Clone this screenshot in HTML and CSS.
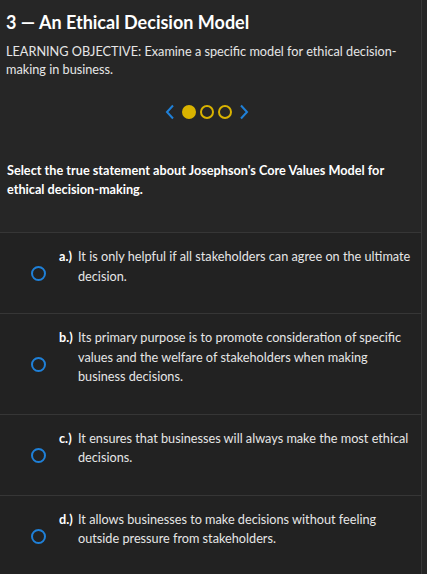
FILE: index.html
```html
<!DOCTYPE html>
<html lang="en">
<head>
    <meta charset="UTF-8">
    <title>3 — An Ethical Decision Model</title>
    <link rel="stylesheet" href="styles.css">
</head>
<body>
    <div class="page">
        <header class="intro">
            <h1 class="title">3 — An Ethical Decision Model</h1>
            <p class="objective">LEARNING OBJECTIVE: Examine a specific model for ethical decision-making in business.</p>
        </header>

        <nav class="pager">
            <svg class="arrow" width="10" height="16" viewBox="0 0 10 16"><path d="M8 1.5 L2 8 L8 14.5" fill="none" stroke="#1f80d8" stroke-width="2"/></svg>
            <span class="dot dot-on"></span>
            <span class="dot"></span>
            <span class="dot"></span>
            <svg class="arrow" width="10" height="16" viewBox="0 0 10 16"><path d="M2 1.5 L8 8 L2 14.5" fill="none" stroke="#1f80d8" stroke-width="2"/></svg>
        </nav>

        <p class="question">Select the true statement about Josephson's Core Values Model for ethical decision-making.</p>

        <ul class="answers">
            <li class="answer">
                <span class="radio"></span>
                <span class="letter">a.)</span>
                <span class="text">It is only helpful if all stakeholders can agree on the ultimate decision.</span>
            </li>
            <li class="answer">
                <span class="radio"></span>
                <span class="letter">b.)</span>
                <span class="text">Its primary purpose is to promote consideration of specific values and the welfare of stakeholders when making business decisions.</span>
            </li>
            <li class="answer">
                <span class="radio"></span>
                <span class="letter">c.)</span>
                <span class="text">It ensures that businesses will always make the most ethical decisions.</span>
            </li>
            <li class="answer">
                <span class="radio"></span>
                <span class="letter">d.)</span>
                <span class="text">It allows businesses to make decisions without feeling outside pressure from stakeholders.</span>
            </li>
        </ul>
    </div>
</body>
</html>
```

FILE: styles.css
```css
body {
    margin: 0;
    background: #262626;
    color: #e6e6e6;
    font-family: Lato, "Open Sans", sans-serif;
    font-size: 12.7px;
}

.page {
    width: 421px;
    min-height: 574px;
    border-right: 1px solid #383838;
    background: #262626;
}

.intro {
    padding: 11px 6px 0;
}

.title {
    margin: 0;
    font-size: 18px;
    line-height: 22px;
    font-weight: 700;
    color: #fff;
}

.objective {
    margin: 9px 0 0;
    line-height: 18px;
}

.pager {
    display: flex;
    justify-content: center;
    align-items: center;
    gap: 4px;
    margin-top: 26px;
    padding-right: 8px;
}

.arrow { margin: 0 3px; }

.dot {
    width: 10px;
    height: 10px;
    border: 2px solid #d9b300;
    border-radius: 50%;
}

.dot-on { background: #d9b300; }

.question {
    margin: 0;
    padding: 41px 7px 33px;
    font-weight: 700;
    line-height: 19px;
    color: #fff;
}

.answers {
    list-style: none;
    margin: 0;
    padding: 0;
    background: #222;
}

.answer {
    display: flex;
    align-items: flex-start;
    border-top: 1px solid #363636;
    padding: 14px 8px 27px 31px;
    line-height: 19.5px;
}

.radio {
    align-self: center;
    width: 11px;
    height: 11px;
    border: 2px solid #1f80d8;
    border-radius: 50%;
    margin: 14px 13px 0 0;
}

.letter {
    width: 19px;
    flex: none;
    font-weight: 700;
    color: #fff;
}

.text { flex: 1; }
```
